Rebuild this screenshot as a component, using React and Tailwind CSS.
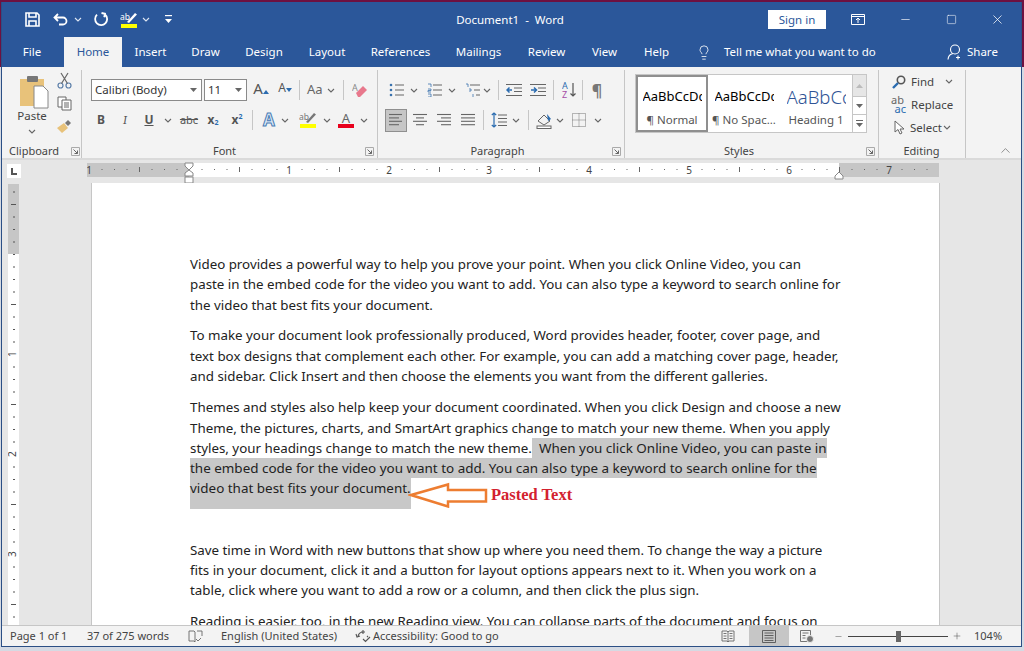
import React from 'react';
import { ChevronUp, Lightbulb, Minus, Plus, Square, X } from 'lucide-react';

const Chev = ({ className = 'w-[14px]', color = '#666' }) => (
  <div className={`flex shrink-0 justify-center ${className}`}>
    <svg width="8" height="5" viewBox="0 0 8 5" fill="none" stroke={color} strokeWidth="1.1"><path d="M1 1l3 3 3-3" /></svg>
  </div>
);

const Sep = ({ className = 'h-[20px]' }) => <div className={`w-px shrink-0 bg-[#c6c6c6] ${className}`} />;

const Launcher = () => (
  <svg width="9" height="9" viewBox="0 0 9 9" fill="none" stroke="#666" strokeWidth="1">
    <path d="M.5 8.5V.5h8v8z" stroke="#aaa" />
    <path d="M2.5 2.5l4 4M6.5 3.5v3h-3" />
  </svg>
);

const Cell = ({ children, className = '' }) => (
  <div className={`flex shrink-0 items-center justify-center ${className}`}>{children}</div>
);

const Lines = ({ rows }) => (
  <svg width="16" height="14" viewBox="0 0 16 14" stroke="#666" strokeWidth="1.1">
    {rows.map((r, i) => <path key={i} d={`M${r[0]} ${1.5 + i * 3.4}H${r[1]}`} />)}
  </svg>
);

const Pen = ({ ink }) => (
  <svg width="18" height="16" viewBox="0 0 18 16">
    <text x="0" y="8" fontSize="8.5" fill={ink} fontFamily="Noto Sans">ab</text>
    <path d="M7 10L15 1l2 1.5L9 11z" fill={ink} />
    <rect x="1" y="12" width="16" height="4" fill="#ffff00" />
  </svg>
);

function GroupLabel({ children, launcher = true, className = '' }) {
  return (
    <div className="flex h-[14px] shrink-0 items-center text-[11px] text-[#444]">
      <div className={`flex-1 text-center ${className}`}>{children}</div>
      {launcher && <div className="mr-[3px] flex"><Launcher /></div>}
    </div>
  );
}

function TitleBar() {
  return (
    <div className="flex h-[35px] items-center bg-[#2b579a] text-white">
      <Cell className="ml-[22px] w-[16px]">
        <svg width="15" height="15" viewBox="0 0 15 15" fill="none" stroke="#fff" strokeWidth="1.6">
          <path d="M1 1h11l2 2v11H1z" />
          <path d="M4 1v4h7V1M4 14V9h7v5" />
        </svg>
      </Cell>
      <Cell className="ml-[12px] w-[16px]">
        <svg width="15" height="14" viewBox="0 0 15 14" fill="none" stroke="#fff" strokeWidth="1.8">
          <path d="M5 1L1.5 4.500 5 8M2 4.500h8a3.500 3.500 0 010 7H6" />
        </svg>
      </Cell>
      <Chev className="ml-[3px] w-[14px]" color="#dfe7f3" />
      <Cell className="ml-[7px] w-[16px]">
        <svg width="15" height="15" viewBox="0 0 15 15" fill="none" stroke="#fff" strokeWidth="1.8">
          <path d="M4 2.700a6 6 0 108-.2M8.500 1l3.500.8-.8 3.500" />
        </svg>
      </Cell>
      <Cell className="ml-[12px] w-[18px]"><Pen ink="#fff" /></Cell>
      <Chev className="ml-[1px] w-[14px]" color="#dfe7f3" />
      <Cell className="ml-[8px] w-[14px]">
        <svg width="7" height="9" viewBox="0 0 7 9" fill="#fff">
          <rect width="7" height="1.2" />
          <path d="M0 4h7L3.500 8z" />
        </svg>
      </Cell>
      <div className="ml-[265px] w-[140px] whitespace-nowrap text-center text-[11.5px]">Document1&nbsp; -&nbsp; Word</div>
      <div className="ml-[188px] flex h-[19px] w-[58px] shrink-0 items-center justify-center bg-white text-[11.5px] text-[#2b579a]">Sign in</div>
      <Cell className="ml-[22px] w-[20px]">
        <svg width="14" height="11" viewBox="0 0 14 11" fill="none" stroke="#fff" strokeWidth="1">
          <path d="M.5 .5h13v10H.5zM.5 2.500h13M7 9V4.500M5 6l2-2 2 2" />
        </svg>
      </Cell>
      <Cell className="ml-[27px] w-[20px]"><Minus size={13} strokeWidth={1.2} /></Cell>
      <Cell className="ml-[26px] w-[20px]"><Square size={11} strokeWidth={1.2} /></Cell>
      <Cell className="ml-[26px] w-[20px]"><X size={15} strokeWidth={1.2} /></Cell>
    </div>
  );
}

function Tabs() {
  const tabs = [
    ['Insert', 'w-[57px]'],
    ['Draw', 'w-[53px]'],
    ['Design', 'w-[64px]'],
    ['Layout', 'w-[62px]'],
    ['References', 'w-[85px]'],
    ['Mailings', 'w-[71px]'],
    ['Review', 'w-[65px]'],
    ['View', 'w-[51px]'],
    ['Help', 'w-[53px]'],
  ];
  return (
    <div className="flex h-[30px] items-center bg-[#2b579a] text-[11.5px] text-white">
      <div className="w-[60px] text-center">File</div>
      <div className="ml-[2px] flex h-full w-[58px] items-center justify-center bg-[#f3f3f3] text-[#2b579a]">Home</div>
      {tabs.map(([t, w]) => <div key={t} className={`text-center ${w}`}>{t}</div>)}
      <Cell className="ml-[13px] w-[16px]"><Lightbulb size={17} strokeWidth={1.2} /></Cell>
      <div className="ml-[12px] w-[150px] whitespace-nowrap">Tell me what you want to do</div>
      <Cell className="ml-[72px] w-[18px]">
        <svg width="16" height="16" viewBox="0 0 16 16" fill="none" stroke="#fff" strokeWidth="1.1">
          <circle cx="8" cy="5.500" r="4.500" />
          <path d="M1 15.500c.3-3.500 2.500-5.500 5-6M11 11.500v4M9 13.500h4" />
        </svg>
      </Cell>
      <div className="ml-[3px]">Share</div>
    </div>
  );
}

function Clipboard() {
  return (
    <div className="flex w-[80px] shrink-0 flex-col border-r border-[#c6c6c6]">
      <div className="flex h-[74px] pl-[11px]">
        <div className="flex w-[38px] flex-col items-center text-[11.5px] text-[#444]">
          <svg width="30" height="38" viewBox="0 0 30 38" className="ml-[3px] mt-[5px]">
            <rect x="1" y="4" width="24" height="27" fill="#e8c27a" />
            <rect x="8" y="1" width="11" height="6" rx="1" fill="#777" />
            <path d="M15 11h9l5 5v17H15z" fill="#fff" stroke="#888" />
          </svg>
          <div className="mt-[-6px]">Paste</div>
          <Chev className="mt-[5px] w-[14px]" />
        </div>
        <div className="flex w-[26px] flex-col items-center pt-[2px]">
          <svg width="15" height="17" viewBox="0 0 15 17" fill="none" stroke="#5b7ea8" strokeWidth="1.2">
            <circle cx="3.500" cy="13.500" r="2.500" /><circle cx="11.500" cy="13.500" r="2.500" />
            <path d="M4.500 11.500L11 1M10.500 11.500L4 1" stroke="#666" />
          </svg>
          <svg width="15" height="15" viewBox="0 0 15 15" fill="#fff" stroke="#666" className="mt-[7px]">
            <path d="M1 1h8v10H1z" /><path d="M5 4h9v10H5zM7 7h5M7 9h5M7 11h5" />
          </svg>
          <svg width="16" height="14" viewBox="0 0 16 14" className="mt-[9px]">
            <path d="M1 8l7-5 4 5-6 5z" fill="#e8c27a" />
            <path d="M9 3l3-3 3 3-3 3z" fill="#777" />
          </svg>
        </div>
      </div>
      <div className="flex h-[14px] items-center pl-[7px] text-[11px] text-[#444]">
        <div className="w-[62px]">Clipboard</div><Launcher />
      </div>
    </div>
  );
}

const GrowA = ({ className, dir }) => (
  <div className={`flex w-[24px] shrink-0 items-baseline justify-center text-[#555] ${className}`}>
    A
    <svg width="6" height="4" viewBox="0 0 6 4" fill="#2b6cb0" className="mb-[9px]">
      <path d={dir === 'up' ? 'M0 4l3-4 3 4z' : 'M0 0l3 4 3-4z'} />
    </svg>
  </div>
);

function FontGroup() {
  return (
    <div className="flex w-[296px] shrink-0 flex-col border-r border-[#c6c6c6]">
      <div className="flex h-[74px] flex-col pl-[9px]">
        <div className="mt-[9px] flex h-[22px] items-center">
          <div className="flex h-[22px] w-[111px] items-center justify-between border border-[#8a8a8a] bg-white pl-[3px] pr-[4px] text-[11.5px] text-[#333]">
            Calibri (Body)
            <svg width="7" height="4" fill="#666"><path d="M0 0h7L3.500 4z" /></svg>
          </div>
          <div className="ml-[2px] flex h-[22px] w-[43px] items-center justify-between border border-[#8a8a8a] bg-white pl-[3px] pr-[4px] text-[11.5px] text-[#333]">
            11
            <svg width="7" height="4" fill="#666"><path d="M0 0h7L3.500 4z" /></svg>
          </div>
          <GrowA className="ml-[2px] text-[15px]" dir="up" />
          <GrowA className="text-[12px]" dir="down" />
          <Sep className="ml-[2px] h-[20px]" />
          <div className="ml-[7px] text-[13px] text-[#666]">Aa</div>
          <Chev className="ml-[1px] w-[14px]" />
          <Sep className="ml-[5px] h-[20px]" />
          <Cell className="ml-[8px] w-[16px]">
            <svg width="16" height="15" viewBox="0 0 16 15">
              <text x="0" y="8" fontSize="9" fill="#888" fontFamily="Noto Sans">A</text>
              <path d="M4 10l7-7 4 4-7 7H6z" fill="#e8788c" />
            </svg>
          </Cell>
        </div>
        <div className="mt-[8px] flex h-[22px] items-center text-[#555]">
          <Cell className="ml-[-2px] w-[24px] text-[12px] font-bold">B</Cell>
          <Cell className="w-[24px] font-serif text-[12px] italic">I</Cell>
          <Cell className="w-[24px] text-[12px] font-bold underline">U</Cell>
          <Chev className="w-[14px]" />
          <Cell className="ml-[2px] w-[24px] text-[11px] line-through">abc</Cell>
          <Cell className="w-[24px] text-[12px] font-bold">x<span className="mt-[6px] text-[7px] text-[#2b6cb0]">2</span></Cell>
          <Cell className="w-[24px] text-[12px] font-bold">x<span className="mb-[6px] text-[7px] text-[#2b6cb0]">2</span></Cell>
          <Sep className="ml-[3px] h-[20px]" />
          <Cell className="ml-[4px] w-[24px] text-[17px] font-bold text-[#dbe8f5] [-webkit-text-stroke:1px_#4a7db5]">A</Cell>
          <Chev className="w-[8px]" />
          <Cell className="ml-[10px] w-[18px]"><Pen ink="#777" /></Cell>
          <Chev className="ml-[3px] w-[14px]" />
          <Cell className="ml-[3px] w-[18px]">
            <svg width="18" height="16" viewBox="0 0 18 16">
              <text x="9" y="11" textAnchor="middle" fontSize="13" fill="#666" fontFamily="Noto Sans">A</text>
              <rect x="1" y="12" width="16" height="4" fill="#e8001c" />
            </svg>
          </Cell>
          <Chev className="ml-[2px] w-[14px]" />
        </div>
      </div>
      <GroupLabel className="pl-[2px]">Font</GroupLabel>
    </div>
  );
}

function ParagraphGroup() {
  const bullets = (
    <svg width="16" height="14" viewBox="0 0 16 14" stroke="#666" strokeWidth="1.1">
      <circle cx="2" cy="2" r="1.3" fill="#3a72ad" stroke="none" />
      <circle cx="2" cy="7" r="1.3" fill="#3a72ad" stroke="none" />
      <circle cx="2" cy="12" r="1.3" fill="#3a72ad" stroke="none" />
      <path d="M6 2h9M6 7h9M6 12h9" />
    </svg>
  );
  const numbers = (
    <svg width="16" height="14" viewBox="0 0 16 14" stroke="#666" strokeWidth="1.1">
      <path d="M1 1h3v3M1 6h3v1.500H1V9h3M1 11h3v3H1" stroke="#3a72ad" strokeWidth=".8" fill="none" />
      <path d="M6 2h9M6 7h9M6 12h9" />
    </svg>
  );
  const multi = (
    <svg width="16" height="14" viewBox="0 0 16 14" stroke="#666" strokeWidth="1.1">
      <path d="M1 1h2v3M4 6h2v2H4M8 11v3" stroke="#3a72ad" strokeWidth=".8" fill="none" />
      <path d="M5 2h10M9 7h6M11 12h4" />
    </svg>
  );
  const indent = (flip) => (
    <svg width="16" height="12" viewBox="0 0 16 12" stroke="#666" strokeWidth="1.1">
      <path d="M0 .5h16M8 4h8M8 7.500h8M0 11.500h16" />
      <path d={flip ? 'M1 6h5M4 3.500L6.500 6 4 8.500' : 'M6 6H1M3.500 3.500L1 6l2.500 2.500'} stroke="#2b6cb0" strokeWidth="1.5" fill="none" />
    </svg>
  );
  return (
    <div className="flex w-[247px] shrink-0 flex-col border-r border-[#c6c6c6]">
      <div className="flex h-[74px] flex-col">
        <div className="mt-[9px] flex h-[22px] items-center">
          <Cell className="ml-[10px] w-[18px]">{bullets}</Cell>
          <Chev className="ml-[1px] w-[14px]" />
          <Cell className="ml-[5px] w-[18px]">{numbers}</Cell>
          <Chev className="ml-[1px] w-[14px]" />
          <Cell className="ml-[5px] w-[18px]">{multi}</Cell>
          <Chev className="ml-[-1px] w-[12px]" />
          <Sep className="ml-[5px] h-[20px]" />
          <Cell className="ml-[6px] w-[18px]">{indent(false)}</Cell>
          <Cell className="ml-[6px] w-[18px]">{indent(true)}</Cell>
          <Sep className="ml-[6px] h-[20px]" />
          <Cell className="ml-[6px] w-[18px]">
            <svg width="15" height="16" viewBox="0 0 15 16">
              <text x="0" y="7" fontSize="9" fill="#2b6cb0" fontFamily="Noto Sans">A</text>
              <text x="0" y="15.500" fontSize="9" fill="#a64ca6" fontFamily="Noto Sans">Z</text>
              <path d="M11 1v13M8.500 11.500L11 14l2.500-2.500" stroke="#555" strokeWidth="1.2" fill="none" />
            </svg>
          </Cell>
          <Sep className="ml-[4px] h-[20px]" />
          <Cell className="ml-[6px] w-[16px] text-[16px] font-bold text-[#777]">¶</Cell>
        </div>
        <div className="mt-[8px] flex h-[22px] items-center">
          <Cell className="ml-[7px] h-[23px] w-[22px] border border-[#8f8f8f] bg-[#c6c6c6]"><Lines rows={[[1, 14], [1, 11], [1, 14], [1, 11]]} /></Cell>
          <Cell className="ml-[4px] w-[18px]"><Lines rows={[[1, 15], [4, 12], [1, 15], [4, 12]]} /></Cell>
          <Cell className="ml-[6px] w-[18px]"><Lines rows={[[1, 15], [5, 15], [1, 15], [5, 15]]} /></Cell>
          <Cell className="ml-[6px] w-[18px]"><Lines rows={[[1, 15], [1, 15], [1, 15], [1, 15]]} /></Cell>
          <Sep className="ml-[6px] h-[20px]" />
          <Cell className="ml-[6px] w-[18px]">
            <svg width="16" height="16" viewBox="0 0 16 16" stroke="#666" strokeWidth="1.1" fill="none">
              <path d="M7 3h9M7 6.500h9M7 10h9M7 13.500h9" />
              <path d="M3 1v14M.8 3L3 1l2.200 2M.8 13L3 15l2.200-2" stroke="#2b6cb0" strokeWidth="1.2" />
            </svg>
          </Cell>
          <Chev className="ml-[1px] w-[14px]" />
          <Sep className="ml-[5px] h-[20px]" />
          <Cell className="ml-[6px] w-[18px]">
            <svg width="17" height="17" viewBox="0 0 17 17" fill="none" stroke="#666">
              <path d="M2 9l6-6 6 6-6 4z" fill="#f3f3f3" />
              <path d="M11 2l4 5-3 2z" fill="#2b6cb0" stroke="none" />
              <rect x="1" y="14" width="14" height="2.5" fill="#fff" />
            </svg>
          </Cell>
          <Chev className="w-[14px]" />
          <Cell className="ml-[4px] w-[16px]">
            <svg width="14" height="14" viewBox="0 0 14 14" fill="none" stroke="#777" strokeDasharray="1 1">
              <path d="M.5 .5h13v13H.5zM.5 7h13M7 .5v13" />
            </svg>
          </Cell>
          <Chev className="ml-[4px] w-[14px]" />
        </div>
      </div>
      <GroupLabel className="pl-[5px]">Paragraph</GroupLabel>
    </div>
  );
}

function StyleCard({ sample, name, active }) {
  return (
    <div className={`flex h-full w-[72px] shrink-0 flex-col items-center overflow-hidden ${active ? 'border-2 border-[#8f8f8f]' : ''}`}>
      <div className={`flex h-[20px] w-full items-center justify-center overflow-hidden whitespace-nowrap ${active ? 'mt-[10px]' : 'mt-[12px]'}`}>{sample}</div>
      <div className="mt-[4px] whitespace-nowrap text-[11.5px] text-[#555]">{name}</div>
    </div>
  );
}

function Styles() {
  return (
    <div className="flex w-[254px] shrink-0 flex-col border-r border-[#c6c6c6]">
      <div className="h-[74px] pl-[10px] pt-[4px]">
        <div className="flex h-[59px] w-[232px] border border-[#c6c6c6] bg-white">
          <StyleCard active name="¶ Normal" sample={<span className="w-[59px] overflow-hidden text-[13px] text-black">AaBbCcDc</span>} />
          <StyleCard name="¶ No Spac..." sample={<span className="w-[59px] overflow-hidden text-[13px] text-black">AaBbCcDc</span>} />
          <StyleCard name="Heading 1" sample={<span className="w-[59px] overflow-hidden text-[18.5px] font-light text-[#2f5496]">AaBbCc</span>} />
          <div className="flex w-[14px] flex-col border-l border-[#c6c6c6]">
            <div className="flex h-[21px] items-center justify-center bg-[#e6e6e6]">
              <svg width="7" height="4" fill="#bbb"><path d="M0 4h7L3.500 0z" /></svg>
            </div>
            <div className="flex h-[19px] items-center justify-center border-y border-[#c6c6c6]">
              <svg width="7" height="4" fill="#666"><path d="M0 0h7L3.500 4z" /></svg>
            </div>
            <div className="flex flex-1 flex-col items-center justify-center gap-[2px]">
              <div className="h-px w-[7px] bg-[#666]" />
              <svg width="7" height="4" fill="#666"><path d="M0 0h7L3.500 4z" /></svg>
            </div>
          </div>
        </div>
      </div>
      <GroupLabel className="pr-[13px]">Styles</GroupLabel>
    </div>
  );
}

function Editing() {
  const row = 'flex h-[23px] items-center text-[11.5px] text-[#444]';
  return (
    <div className="flex w-[87px] shrink-0 flex-col border-r border-[#c6c6c6]">
      <div className="h-[74px] pl-[11px]">
        <div className={row}>
          <Cell className="w-[18px]">
            <svg width="14" height="14" viewBox="0 0 14 14" fill="none">
              <circle cx="9" cy="5" r="3.700" stroke="#555" strokeWidth="1.6" />
              <path d="M6 8l-5 5" stroke="#2b6cb0" strokeWidth="2.4" />
            </svg>
          </Cell>
          <span className="ml-[3px] w-[34px]">Find</span>
          <Chev className="w-[8px]" />
        </div>
        <div className={row}>
          <Cell className="w-[18px]">
            <svg width="17" height="17" viewBox="0 0 17 17">
              <text x="0" y="8" fontSize="11" fill="#666" fontFamily="Noto Sans">ab</text>
              <text x="3.500" y="16.500" fontSize="11" fill="#2b6cb0" fontFamily="Noto Sans">ac</text>
            </svg>
          </Cell>
          <span className="ml-[3px]">Replace</span>
        </div>
        <div className={row}>
          <Cell className="w-[18px]">
            <svg width="11" height="15" viewBox="0 0 11 15" fill="#fff" stroke="#666">
              <path d="M1 1v11l3-2.500 2 4.500 2-1-2-4h4z" />
            </svg>
          </Cell>
          <span className="ml-[2px] w-[33px]">Select</span>
          <Chev className="w-[8px]" />
        </div>
      </div>
      <GroupLabel launcher={false} className="pr-[1px]">Editing</GroupLabel>
    </div>
  );
}

function Ribbon() {
  return (
    <div className="flex h-[93px] border-b-2 border-[#dadada] bg-[#f3f3f3] pt-[3px]">
      <Clipboard />
      <FontGroup />
      <ParagraphGroup />
      <Styles />
      <Editing />
      <div className="flex flex-1 items-end justify-end pr-[8px]">
        <ChevronUp size={15} strokeWidth={1} color="#555" />
      </div>
    </div>
  );
}

function HRuler() {
  const dots = [];
  for (let i = 0; i < 68; i++) {
    const x = 2 + i * 12.5;
    const inch = i % 8 === 0;
    const half = i % 4 === 0 && !inch;
    if (inch) continue;
    dots.push(<rect key={i} x={x} y={half ? 7 : 9} width="1" height={half ? 5 : 1} fill="#666" />);
  }
  return (
    <svg width="860" height="23" viewBox="0 0 860 23" className="shrink-0" fontFamily="Noto Sans" fontSize="10" fill="#444">
      <rect x="0" y="3" width="102" height="14" fill="#c6c6c6" />
      <rect x="102" y="3" width="650" height="14" fill="#fff" />
      <rect x="752" y="3" width="100" height="14" fill="#c6c6c6" />
      {dots}
      {[[2, '1'], [202, '1'], [302, '2'], [402, '3'], [502, '4'], [602, '5'], [702, '6'], [802, '7']].map(([x, n]) => (
        <text key={x} x={x} y="14" textAnchor="middle">{n}</text>
      ))}
      <path d="M98 3h8v3l-4 4-4-4zM98 16v-3l4-3 4 3v3z" fill="#fff" stroke="#888" />
      <rect x="98" y="17" width="8" height="6" fill="#fff" stroke="#888" />
      <path d="M748 16l4-4 4 4v3h-8z" fill="#fff" stroke="#888" />
    </svg>
  );
}

function VRuler() {
  const items = [];
  for (let i = -5; i < 30; i++) {
    const y = 71 + i * 12.5;
    if (i % 8 === 0 && i > 0) continue;
    const half = i % 4 === 0 && i % 8 !== 0;
    items.push(<rect key={i} x={half ? 3 : 5} y={y} width={half ? 5 : 2} height="1" fill="#555" />);
  }
  return (
    <svg width="11" height="442" viewBox="0 0 11 442" fontFamily="Noto Sans" fontSize="10" fill="#444" className="shrink-0">
      <rect x="0" y="1" width="11" height="70" fill="#c6c6c6" />
      <rect x="0" y="71" width="11" height="371" fill="#fff" />
      {items}
      {[[171, '1'], [271, '2'], [371, '3']].map(([y, n]) => (
        <text key={y} x="5.5" y={y} textAnchor="middle" dominantBaseline="middle" transform={`rotate(-90 5.5 ${y})`}>{n}</text>
      ))}
    </svg>
  );
}

function Line({ children }) {
  return <div className="h-[20.3px] whitespace-nowrap leading-[20.3px]">{children}</div>;
}

function Page() {
  return (
    <div className="h-[442px] w-[849px] shrink-0 overflow-hidden border-x border-[#c6c6c6] bg-white pl-[98px] pt-[71px] text-[13.33px] text-[#222]">
      <div className="mb-[10.5px]">
        <Line>Video provides a powerful way to help you prove your point. When you click Online Video, you can</Line>
        <Line>paste in the embed code for the video you want to add. You can also type a keyword to search online for</Line>
        <Line>the video that best fits your document.</Line>
      </div>
      <div className="mb-[11px]">
        <Line>To make your document look professionally produced, Word provides header, footer, cover page, and</Line>
        <Line>text box designs that complement each other. For example, you can add a matching cover page, header,</Line>
        <Line>and sidebar. Click Insert and then choose the elements you want from the different galleries.</Line>
      </div>
      <div className="relative mb-[41px]">
        <Line>Themes and styles also help keep your document coordinated. When you click Design and choose a new</Line>
        <Line>Theme, the pictures, charts, and SmartArt graphics change to match your new theme. When you apply</Line>
        <Line>styles, your headings change to match the new theme.<span className="inline-block h-[20.3px] bg-[#c8c8c8] align-top text-[13.45px]">&nbsp; When you click Online Video, you can paste in</span></Line>
        <Line><span className="inline-block h-[20.3px] bg-[#c8c8c8] align-top text-[13.45px]">the embed code for the video you want to add. You can also type a keyword to search online for the</span></Line>
        <Line><span className="inline-block h-[31px] bg-[#c8c8c8] align-top text-[13.45px]">video that best fits your document.</span></Line>
        <div className="absolute left-[218px] top-[85px] flex items-center">
          <svg width="80" height="26" viewBox="0 0 80 26" fill="none" stroke="#ed7d31" strokeWidth="2.5">
            <path d="M3 13L40 2.500v5.500h38v11.500H40v5z" />
          </svg>
          <span className="ml-[3px] font-['Liberation_Serif',serif] text-[16.5px] font-bold text-[#d3212f]">Pasted Text</span>
        </div>
      </div>
      <div className="mb-[10.5px]">
        <Line>Save time in Word with new buttons that show up where you need them. To change the way a picture</Line>
        <Line>fits in your document, click it and a button for layout options appears next to it. When you work on a</Line>
        <Line>table, click where you want to add a row or a column, and then click the plus sign.</Line>
      </div>
      <Line>Reading is easier, too, in the new Reading view. You can collapse parts of the document and focus on</Line>
    </div>
  );
}

function StatusBar() {
  return (
    <div className="flex h-[21px] items-center border-t border-[#c6c6c6] bg-[#f3f3f3] text-[11px] text-[#444]">
      <div className="ml-[8px] w-[77px]">Page 1 of 1</div>
      <div className="w-[101px]">37 of 275 words</div>
      <svg width="15" height="13" viewBox="0 0 15 13" fill="none" stroke="#666" strokeWidth=".9">
        <path d="M1 1h5l1 1v10L6 11H1zM9 1h5v5M13 8l-3 3-2-2" />
      </svg>
      <div className="ml-[18px] w-[134px]">English (United States)</div>
      <svg width="16" height="14" viewBox="0 0 16 14" fill="none" stroke="#555" strokeWidth="1.1">
        <path d="M8 3a5 5 0 00-5 5M1 5l1 3 3-1M8 1v4M6 3h4M13 7l-1 1M8 10l2.500 2.500L15 8" />
      </svg>
      <div className="ml-[2px] w-[345px]">Accessibility: Good to go</div>
      <Cell className="w-[20px]">
        <svg width="14" height="13" viewBox="0 0 14 13" fill="none" stroke="#666" strokeWidth=".9">
          <path d="M1 1h5l1 1 1-1h5v10H8l-1 1-1-1H1zM7 2v10M2.500 3.500h3M2.500 6h3M2.500 8.500h3M8.500 3.500h3M8.500 6h3M8.500 8.500h3" />
        </svg>
      </Cell>
      <Cell className="ml-[11px] h-full w-[40px] bg-[#c6c6c6]">
        <svg width="14" height="13" viewBox="0 0 14 13" fill="none" stroke="#555" strokeWidth=".9">
          <path d="M.5 .5h13v12H.5zM2.500 3h9M2.500 5.500h9M2.500 8h9M2.500 10.500h9" />
        </svg>
      </Cell>
      <Cell className="ml-[11px] w-[14px]">
        <svg width="14" height="13" viewBox="0 0 14 13" fill="none" stroke="#666" strokeWidth=".9">
          <path d="M.5 .5h10v11H.5zM2.500 3h6M2.500 5.500h3M2.500 8h3" />
          <circle cx="10" cy="9" r="3.500" fill="#777" stroke="#f3f3f3" />
        </svg>
      </Cell>
      <Cell className="ml-[19px] w-[10px]"><Minus size={9} strokeWidth={1.2} /></Cell>
      <div className="relative ml-[5px] h-px w-[100px] bg-[#444]">
        <div className="absolute left-[48px] top-[-5px] h-[11px] w-[5px] bg-[#666]" />
      </div>
      <Cell className="ml-[4px] w-[10px]"><Plus size={10} strokeWidth={1.2} /></Cell>
      <div className="ml-[12px]">104%</div>
    </div>
  );
}

export default function App() {
  return (
    <div className="h-[651px] w-[1024px] overflow-hidden bg-[linear-gradient(#6d1141_67px,#d5dae3_67px)] font-['Noto_Sans',sans-serif]">
      <div className="h-[2px]" />
      <div className="ml-[1px] mr-[2px] border-x border-b border-[#2b4f85]">
        <TitleBar />
        <Tabs />
        <Ribbon />
        <div className="flex h-[23px] bg-[#e6e6e6]">
          <div className="ml-[5px] mt-[4px] h-[14px] w-[14px] bg-white">
            <svg width="14" height="14" viewBox="0 0 14 14"><path d="M5 4v6h5" fill="none" stroke="#555" strokeWidth="2" /></svg>
          </div>
          <div className="ml-[66px]"><HRuler /></div>
        </div>
        <div className="flex h-[442px] bg-[#e6e6e6]">
          <div className="ml-[6px] w-[11px]"><VRuler /></div>
          <div className="ml-[72px]"><Page /></div>
        </div>
        <StatusBar />
      </div>
    </div>
  );
}
